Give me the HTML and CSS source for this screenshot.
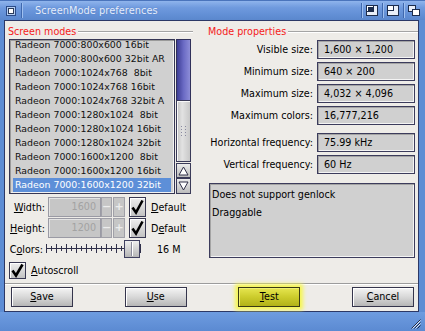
FILE: index.html
```html
<!DOCTYPE html>
<html>
<head>
<meta charset="utf-8">
<link rel="stylesheet" href="styles.css">
</head>
<body>
<div class="window">
  <div class="titlebar">
    <span class="gad close"><svg width="10" height="10" viewBox="0 0 10 10"><rect x="0.5" y="0.5" width="9" height="9" fill="#b4cdf0" stroke="#2b4b88"/><rect x="2.5" y="2.5" width="5" height="5" fill="#ffffff" stroke="#2b3b5a"/></svg></span>
    <span class="tsep first"></span>
    <span class="title">ScreenMode preferences</span>
    <span class="tsep"></span>
    <span class="gad"><svg width="12" height="11" viewBox="0 0 12 11"><rect x="0.5" y="0.5" width="11" height="10" fill="#e8eef8" stroke="#1c2c4c"/><rect x="0.5" y="0.5" width="7" height="6" fill="#ffffff" stroke="#1c2c4c"/><rect x="2" y="2" width="5" height="4" fill="#1c2c4c"/></svg></span>
    <span class="tsep"></span>
    <span class="gad"><svg width="12" height="11" viewBox="0 0 12 11"><rect x="0.5" y="0.5" width="11" height="10" fill="#e8eef8" stroke="#1c2c4c"/><rect x="0.5" y="0.5" width="6" height="5" fill="#ffffff" stroke="#1c2c4c"/></svg></span>
    <span class="tsep"></span>
    <span class="gad last"><svg width="12" height="11" viewBox="0 0 12 11"><rect x="0.5" y="0.5" width="7" height="6" fill="#e8eef8" stroke="#1c2c4c"/><rect x="4.5" y="4.5" width="7" height="6" fill="#ffffff" stroke="#1c2c4c"/></svg></span>
  </div>
  <div class="frame">
    <div class="content">
      <div class="main">
        <div class="left">
          <div class="hdr">Screen modes</div>
          <div class="listrow">
            <div class="list">
              <div class="rows">
                <div class="item">Radeon 7000:800x600 16bit</div>
                <div class="item">Radeon 7000:800x600 32bit AR</div>
                <div class="item">Radeon 7000:1024x768  8bit</div>
                <div class="item">Radeon 7000:1024x768 16bit</div>
                <div class="item">Radeon 7000:1024x768 32bit A</div>
                <div class="item">Radeon 7000:1280x1024  8bit</div>
                <div class="item">Radeon 7000:1280x1024 16bit</div>
                <div class="item">Radeon 7000:1280x1024 32bit</div>
                <div class="item">Radeon 7000:1600x1200  8bit</div>
                <div class="item">Radeon 7000:1600x1200 16bit</div>
                <div class="item sel">Radeon 7000:1600x1200 32bit</div>
              </div>
            </div>
            <div class="sb">
              <div class="track">
                <div class="knob"><svg width="6" height="10" viewBox="0 0 6 10"><g fill="#8a8aa0"><rect x="0" y="0" width="1" height="1"/><rect x="4" y="0" width="1" height="1"/><rect x="0" y="3" width="1" height="1"/><rect x="4" y="3" width="1" height="1"/><rect x="0" y="6" width="1" height="1"/><rect x="4" y="6" width="1" height="1"/><rect x="0" y="9" width="1" height="1"/><rect x="4" y="9" width="1" height="1"/></g></svg></div>
              </div>
              <div class="arrow up"><svg width="11" height="10" viewBox="0 0 11 10"><path d="M5.5 1 L10 9 L1 9 Z" fill="#ffffff" stroke="#303048"/></svg></div>
              <div class="arrow down"><svg width="11" height="10" viewBox="0 0 11 10"><path d="M1 1 L10 1 L5.5 9 Z" fill="#ffffff" stroke="#303048"/></svg></div>
            </div>
          </div>
          <div class="ctl wrow">
            <span class="lbl"><u>W</u>idth:</span>
            <span class="inp">1600</span>
            <span class="pm minus">−</span>
            <span class="pm plus">+</span>
            <span class="chk"><svg width="15" height="18" viewBox="0 0 15 18"><path d="M2.5 9.5 L6 14.5 L12.5 2.5" fill="none" stroke="#000" stroke-width="2.6" stroke-linejoin="miter"/></svg></span>
            <span class="dflt"><u>D</u>efault</span>
          </div>
          <div class="ctl hrow">
            <span class="lbl"><u>H</u>eight:</span>
            <span class="inp">1200</span>
            <span class="pm minus">−</span>
            <span class="pm plus">+</span>
            <span class="chk"><svg width="15" height="18" viewBox="0 0 15 18"><path d="M2.5 9.5 L6 14.5 L12.5 2.5" fill="none" stroke="#000" stroke-width="2.6" stroke-linejoin="miter"/></svg></span>
            <span class="dflt">D<u>e</u>fault</span>
          </div>
          <div class="ctl crow">
            <span class="lbl short">C<u>o</u>lors:</span>
            <svg class="slider" width="96" height="20" viewBox="0 0 96 20">
              <g stroke="#30304a" stroke-width="1">
                <line x1="0" y1="9.5" x2="95" y2="9.5"/>
                <line x1="0.5" y1="5" x2="0.5" y2="14"/>
                <line x1="5.5" y1="7" x2="5.5" y2="12"/>
                <line x1="10.5" y1="5" x2="10.5" y2="14"/>
                <line x1="15.5" y1="7" x2="15.5" y2="12"/>
                <line x1="20.5" y1="5" x2="20.5" y2="14"/>
                <line x1="25.5" y1="7" x2="25.5" y2="12"/>
                <line x1="30.5" y1="5" x2="30.5" y2="14"/>
                <line x1="35.5" y1="7" x2="35.5" y2="12"/>
                <line x1="40.5" y1="5" x2="40.5" y2="14"/>
                <line x1="45.5" y1="7" x2="45.5" y2="12"/>
                <line x1="50.5" y1="5" x2="50.5" y2="14"/>
                <line x1="55.5" y1="7" x2="55.5" y2="12"/>
                <line x1="60.5" y1="5" x2="60.5" y2="14"/>
                <line x1="65.5" y1="7" x2="65.5" y2="12"/>
                <line x1="70.5" y1="5" x2="70.5" y2="14"/>
                <line x1="75.5" y1="7" x2="75.5" y2="12"/>
                <line x1="94.5" y1="5" x2="94.5" y2="14"/>
              </g>
              <defs><linearGradient id="kg" x1="0" y1="0" x2="0" y2="1"><stop offset="0" stop-color="#f0f0f0"/><stop offset="1" stop-color="#b4b4b4"/></linearGradient></defs>
              <rect x="78.5" y="1.5" width="15" height="17" fill="url(#kg)" stroke="#404060"/>
              <line x1="85.5" y1="3" x2="85.5" y2="17" stroke="#8a8a9a"/>
              <line x1="86.5" y1="3" x2="86.5" y2="17" stroke="#ffffff"/>
            </svg>
            <span class="val16">16 M</span>
          </div>
          <div class="ctl arow">
            <span class="chk small"><svg width="15" height="15" viewBox="0 0 15 15"><path d="M2.5 7.5 L6 12.5 L12.5 1.5" fill="none" stroke="#000" stroke-width="2.6"/></svg></span>
            <span class="dflt"><u>A</u>utoscroll</span>
          </div>
        </div>
        <div class="right">
          <div class="hdr">Mode properties</div>
          <div class="props">
            <span class="plbl">Visible size:</span><span class="pval">1,600 × 1,200</span>
            <span class="plbl">Minimum size:</span><span class="pval">640 × 200</span>
            <span class="plbl">Maximum size:</span><span class="pval">4,032 × 4,096</span>
            <span class="plbl">Maximum colors:</span><span class="pval">16,777,216</span>
          </div>
          <div class="props freq">
            <span class="plbl">Horizontal frequency:</span><span class="pval">75.99 kHz</span>
            <span class="plbl">Vertical frequency:</span><span class="pval">60 Hz</span>
          </div>
          <div class="info">
            <div>Does not support genlock</div>
            <div>Draggable</div>
          </div>
        </div>
      </div>
      <div class="sep"></div>
      <div class="buttons">
        <span class="btn"><u>S</u>ave</span>
        <span class="btn"><u>U</u>se</span>
        <span class="btn test"><u>T</u>est</span>
        <span class="btn"><u>C</u>ancel</span>
      </div>
    </div>
  </div>
  <div class="bottombar">
    <svg class="resize" width="10" height="10" viewBox="0 0 10 10"><g stroke="#1c2c4c" stroke-width="1"><line x1="9.5" y1="0.5" x2="0.5" y2="9.5"/><line x1="9.5" y1="3.5" x2="3.5" y2="9.5"/><line x1="9.5" y1="6.5" x2="6.5" y2="9.5"/></g><g stroke="#ffffff" stroke-width="1" opacity="0.8"><line x1="9.5" y1="1.5" x2="1.5" y2="9.5"/><line x1="9.5" y1="4.5" x2="4.5" y2="9.5"/></g></svg>
  </div>
</div>
</body>
</html>
```

FILE: styles.css
```css
* { box-sizing: border-box; }
html, body { margin: 0; padding: 0; }
body {
  width: 425px;
  height: 331px;
  overflow: hidden;
  font-family: "DejaVu Sans", "Liberation Sans", sans-serif;
  font-size: 9.6px;
  color: #000;
  background: #5e8dd4;
}
u { text-decoration: underline; text-underline-offset: 1px; }

.window {
  width: 425px;
  height: 331px;
  display: flex;
  flex-direction: column;
  background: #5e8dd4;
}

/* title bar */
.titlebar {
  height: 20px;
  flex: none;
  display: flex;
  align-items: center;
  background: linear-gradient(#8fb4ec 0%, #6f9ade 35%, #6390d6 70%, #5a87cd 100%);
  border-top: 1px solid #4a74bc;
}
.gad { display: flex; align-items: center; justify-content: center; }
.gad.close { margin-left: 6px; }
.gad.last { margin-right: 5px; }
.tsep {
  width: 2px;
  height: 15px;
  border-left: 1px solid #3f68ae;
  border-right: 1px solid #9fc0f0;
  margin: 0 3px 0 4px;
}
.tsep.first { margin-left: 5px; }
.title {
  flex: 1;
  margin-left: 9px;
  color: #e6efff;
  font-size: 9.8px;
  letter-spacing: 0.05px;
  text-shadow: 0 0 1px rgba(40,70,130,0.4);
}

/* frame */
.frame {
  height: 292px;
  flex: none;
  padding: 0 6px 0 4px;
}
.content {
  height: 292px;
  border: 1px solid #2c3866;
  background: #eeece8;
  display: flex;
  flex-direction: column;
}
.main {
  height: 262px;
  display: flex;
  padding: 3px 0 0 3px;
}
.left { width: 185px; }
.right { width: 210px; margin-left: 15px; }

.hdr {
  height: 14px;
  display: flex;
  align-items: center;
  color: #f42020;
  white-space: nowrap;
}
.hdr::after {
  content: "";
  flex: 1;
  height: 1px;
  margin-left: 2px;
  background: #a4a4a4;
  box-shadow: 0 1px 0 #ffffff;
}

/* list */
.listrow {
  display: flex;
  height: 155px;
  margin-top: 1px;
}
.list {
  width: 166px;
  margin-left: 1px;
  height: 155px;
  border: 1px solid #363654;
  background: #d0d0d0;
  overflow: hidden;
  box-shadow: inset 1px 1px 0 #9a9a9a, inset -1px -1px 0 #f2f2f2;
}
.rows { margin-top: -2px; }
.item {
  height: 14px;
  line-height: 14px;
  margin: 0 3px;
  padding-left: 2px;
  white-space: pre;
  font-size: 9.4px;
  color: #111;
}
.item.sel { background: #5d8fd8; color: #ffffff; }

.sb {
  width: 15px;
  margin-left: 1px;
  display: flex;
  flex-direction: column;
}
.track {
  height: 123px;
  border: 1px solid #30305a;
  background: linear-gradient(to right, #3d3d95, #6a6ac4 50%, #8d8dd8);
  display: flex;
  flex-direction: column;
  justify-content: flex-end;
}
.knob {
  height: 62px;
  margin: 0 -1px -1px -1px;
  border: 1px solid #3a3a58;
  background: linear-gradient(to right, #c4c4c4, #e2e2e2 40%, #c8c8c8);
  box-shadow: inset 1px 1px 0 #f8f8f8;
  display: flex;
  align-items: center;
  justify-content: center;
}
.arrow {
  border: 1px solid #3a3a58;
  background: linear-gradient(#ececec, #bcbcbc);
  display: flex;
  align-items: center;
  justify-content: center;
}
.arrow.up { height: 15px; margin-top: 1px; }
.arrow.down { height: 16px; }

/* controls */
.ctl {
  display: flex;
  align-items: center;
  height: 20px;
  white-space: nowrap;
}
.wrow { margin-top: 3px; }
.hrow { margin-top: 1px; }
.crow { margin-top: 1px; }
.arow { margin-top: 3px; height: 17px; padding-left: 1px; }
.lbl { width: 37px; margin-right: 3px; text-align: right; }
.lbl.short { width: 35px; margin-right: 3px; }
.inp {
  width: 53px;
  height: 20px;
  border: 1px solid #9a9aa4;
  background: #c6c6c6;
  box-shadow: inset 1px 1px 0 #e4e4e4;
  color: #a2a2a2;
  text-align: right;
  padding-right: 4px;
  line-height: 18px;
}
.pm {
  height: 20px;
  border: 1px solid #a0a0a8;
  background: #c6c6c6;
  color: #ececec;
  font-weight: bold;
  font-size: 11px;
  text-align: center;
  line-height: 17px;
}
.pm.minus { width: 11px; margin-left: 0; }
.pm.plus { width: 12px; margin-left: 1px; }
.chk {
  width: 17px;
  height: 20px;
  margin-left: 4px;
  border: 1px solid #383852;
  background: linear-gradient(#eeeeee, #c2c2c2);
  box-shadow: inset 1px 1px 0 #ffffff;
  display: flex;
  align-items: center;
  justify-content: center;
}
.chk.small { height: 17px; margin-left: 0; }
.dflt { margin-left: 5px; }
.slider { display: block; flex: none; }
.val16 { margin-left: 15px; }

/* right column */
.props {
  display: grid;
  grid-template-columns: 105px 98px;
  grid-auto-rows: 19px;
  column-gap: 4px;
  row-gap: 3px;
  margin-top: 2px;
}
.props.freq { margin-top: 8px; }
.plbl {
  text-align: right;
  line-height: 19px;
  white-space: nowrap;
}
.pval {
  border: 1px solid #3c3c5c;
  background: #d0d0d0;
  box-shadow: inset 1px 1px 0 #a4a4a4, inset -1px -1px 0 #f4f4f4;
  padding-left: 6px;
  line-height: 17px;
  white-space: nowrap;
}
.info {
  margin-top: 9px;
  margin-left: 1px;
  width: 206px;
  height: 75px;
  border: 1px solid #3c3c5c;
  background: #d0d0d0;
  box-shadow: inset 1px 1px 0 #a4a4a4, inset -1px -1px 0 #f4f4f4;
  padding: 2px 0 0 2px;
  line-height: 18px;
}

/* bottom */
.sep {
  height: 2px;
  border-top: 1px solid #9c9c9c;
  border-bottom: 1px solid #ffffff;
}
.buttons {
  display: flex;
  justify-content: space-between;
  padding: 0 4px 0 6px;
  margin-top: 2px;
}
.btn {
  width: 62px;
  height: 20px;
  border: 1px solid #35354c;
  background: linear-gradient(#f4f4f4, #d8d8d8 50%, #b6b6b6);
  box-shadow: inset 1px 1px 0 #ffffff;
  text-align: center;
  line-height: 18px;
}
.btn.test {
  border-color: #3a3a14;
  background: linear-gradient(#e6e650, #cccc2c 50%, #b2b218);
  box-shadow: 0 0 4px 3px #f6f650, inset 1px 1px 0 #f0f070;
}

.bottombar {
  flex: 1;
  display: flex;
  justify-content: flex-end;
  align-items: flex-end;
  padding: 0 4px 2px 0;
  background: linear-gradient(#6e9ce0, #5b8ad2);
}
.resize { display: block; }
```
